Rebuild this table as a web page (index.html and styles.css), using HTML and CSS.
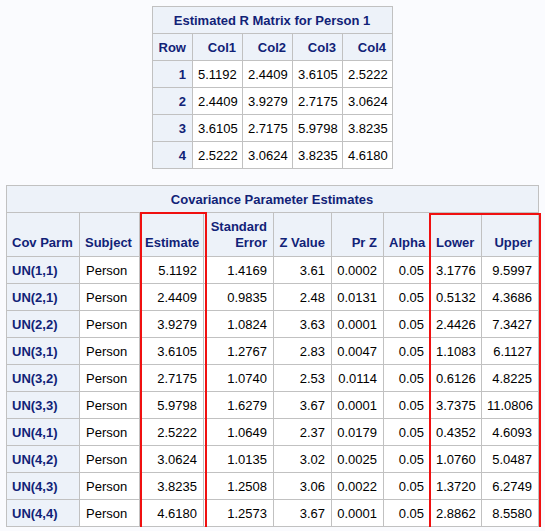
FILE: index.html
```html
<!DOCTYPE html>
<html>
<head>
<meta charset="utf-8">
<link rel="stylesheet" href="styles.css">
</head>
<body>
<table class="sas matrix">
  <colgroup><col class="c-row"><col class="c-col"><col class="c-col"><col class="c-col"><col class="c-col"></colgroup>
  <thead>
    <tr><th colspan="5" class="title">Estimated R Matrix for Person 1</th></tr>
    <tr class="hdr"><th class="r">Row</th><th class="r">Col1</th><th class="r">Col2</th><th class="r">Col3</th><th class="r">Col4</th></tr>
  </thead>
  <tbody>
    <tr><th class="r">1</th><td>5.1192</td><td>2.4409</td><td>3.6105</td><td>2.5222</td></tr>
    <tr><th class="r">2</th><td>2.4409</td><td>3.9279</td><td>2.7175</td><td>3.0624</td></tr>
    <tr><th class="r">3</th><td>3.6105</td><td>2.7175</td><td>5.9798</td><td>3.8235</td></tr>
    <tr><th class="r">4</th><td>2.5222</td><td>3.0624</td><td>3.8235</td><td>4.6180</td></tr>
  </tbody>
</table>

<div class="wrap">
<table class="sas cov">
  <colgroup>
    <col class="w-parm"><col class="w-subj"><col class="w-est"><col class="w-se"><col class="w-z"><col class="w-p"><col class="w-a"><col class="w-lo"><col class="w-up">
  </colgroup>
  <thead>
    <tr><th colspan="9" class="title">Covariance Parameter Estimates</th></tr>
    <tr class="hdr2">
      <th class="l">Cov Parm</th><th class="l">Subject</th><th class="l">Estimate</th><th class="r">Standard<br>Error</th><th class="r">Z Value</th><th class="r">Pr Z</th><th class="r">Alpha</th><th class="l">Lower</th><th class="r">Upper</th>
    </tr>
  </thead>
  <tbody>
    <tr><th class="l">UN(1,1)</th><td class="l">Person</td><td>5.1192</td><td>1.4169</td><td>3.61</td><td>0.0002</td><td>0.05</td><td>3.1776</td><td>9.5997</td></tr>
    <tr><th class="l">UN(2,1)</th><td class="l">Person</td><td>2.4409</td><td>0.9835</td><td>2.48</td><td>0.0131</td><td>0.05</td><td>0.5132</td><td>4.3686</td></tr>
    <tr><th class="l">UN(2,2)</th><td class="l">Person</td><td>3.9279</td><td>1.0824</td><td>3.63</td><td>0.0001</td><td>0.05</td><td>2.4426</td><td>7.3427</td></tr>
    <tr><th class="l">UN(3,1)</th><td class="l">Person</td><td>3.6105</td><td>1.2767</td><td>2.83</td><td>0.0047</td><td>0.05</td><td>1.1083</td><td>6.1127</td></tr>
    <tr><th class="l">UN(3,2)</th><td class="l">Person</td><td>2.7175</td><td>1.0740</td><td>2.53</td><td>0.0114</td><td>0.05</td><td>0.6126</td><td>4.8225</td></tr>
    <tr><th class="l">UN(3,3)</th><td class="l">Person</td><td>5.9798</td><td>1.6279</td><td>3.67</td><td>0.0001</td><td>0.05</td><td>3.7375</td><td>11.0806</td></tr>
    <tr><th class="l">UN(4,1)</th><td class="l">Person</td><td>2.5222</td><td>1.0649</td><td>2.37</td><td>0.0179</td><td>0.05</td><td>0.4352</td><td>4.6093</td></tr>
    <tr><th class="l">UN(4,2)</th><td class="l">Person</td><td>3.0624</td><td>1.0135</td><td>3.02</td><td>0.0025</td><td>0.05</td><td>1.0760</td><td>5.0487</td></tr>
    <tr><th class="l">UN(4,3)</th><td class="l">Person</td><td>3.8235</td><td>1.2508</td><td>3.06</td><td>0.0022</td><td>0.05</td><td>1.3720</td><td>6.2749</td></tr>
    <tr><th class="l">UN(4,4)</th><td class="l">Person</td><td>4.6180</td><td>1.2573</td><td>3.67</td><td>0.0001</td><td>0.05</td><td>2.8862</td><td>8.5580</td></tr>
  </tbody>
</table>
<div class="hl hl-est"></div>
<div class="hl hl-ci"></div>
</div>
</body>
</html>
```

FILE: styles.css
```css
html, body {
  margin: 0;
  background: #fafbfe;
}
body {
  padding-top: 6px;
  font-family: "Liberation Sans", Arial, sans-serif;
  font-size: 13px;
  color: #000;
}
.sas {
  border-collapse: collapse;
  table-layout: fixed;
  margin: 0 auto;
}
.sas th, .sas td {
  border: 1px solid #c1c1c1;
  height: 27px;
  padding: 0 6px 0 5px;
  line-height: 15px;
  white-space: nowrap;
  box-sizing: border-box;
}
.sas td {
  background: #fff;
  text-align: right;
  font-weight: normal;
}
.sas th {
  background: #edf2f9;
  color: #112277;
  font-weight: bold;
}
.sas .l { text-align: left; }
.sas .r { text-align: right; }
.sas .title { text-align: center; }
.sas td.l { padding-left: 6px; }

.matrix { width: 240px; }
.c-row { width: 40px; }
.c-col { width: 50px; }

.wrap {
  position: relative;
  width: 532px;
  margin: 16px 0 0 6px;
}
.cov { width: 532px; margin: 0; }
.w-parm { width: 73px; }
.w-subj { width: 60px; }
.w-est { width: 64px; }
.w-se { width: 70px; }
.w-z { width: 58px; }
.w-p { width: 52px; }
.w-a { width: 47px; }
.w-lo { width: 51px; }
.w-up { width: 57px; }

.cov .hdr2 th {
  height: 44px;
  vertical-align: bottom;
  padding-bottom: 5px;
  line-height: 16px;
}

.hl {
  position: absolute;
  border: 2px solid #f01010;
  box-sizing: border-box;
}
.hl-est { left: 134px; top: 27px; width: 67px; height: 317px; }
.hl-ci { left: 423px; top: 28px; width: 112px; height: 317px; }
```
